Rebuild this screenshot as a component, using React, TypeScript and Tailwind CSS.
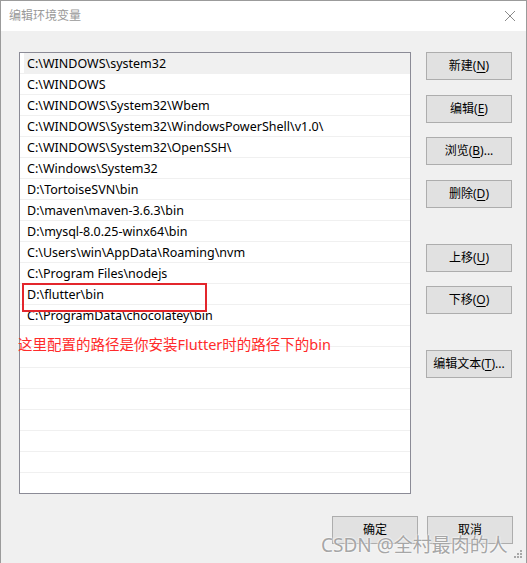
const paths = [
  "C:\\WINDOWS\\system32",
  "C:\\WINDOWS",
  "C:\\WINDOWS\\System32\\Wbem",
  "C:\\WINDOWS\\System32\\WindowsPowerShell\\v1.0\\",
  "C:\\WINDOWS\\System32\\OpenSSH\\",
  "C:\\Windows\\System32",
  "D:\\TortoiseSVN\\bin",
  "D:\\maven\\maven-3.6.3\\bin",
  "D:\\mysql-8.0.25-winx64\\bin",
  "C:\\Users\\win\\AppData\\Roaming\\nvm",
  "C:\\Program Files\\nodejs",
  "D:\\flutter\\bin",
  "C:\\ProgramData\\chocolatey\\bin",
];

const font = "font-['Noto_Sans','Noto_Sans_CJK_SC',sans-serif]";

const Btn = ({ label, className = "" }: { label: React.ReactNode; className?: string }) => (
  <button
    className={`w-[86px] h-[28px] bg-[#e1e1e1] border border-[#adadad] text-[12px] text-black flex items-center justify-center ${className}`}
  >
    {label}
  </button>
);

const Key = ({ k }: { k: string }) => <span className="underline underline-offset-2">{k}</span>;

export default function App() {
  const rows = [...paths, ...Array(21 - paths.length).fill("")];
  return (
    <div className={`relative w-[527px] h-[563px] overflow-hidden border-t border-x border-[#9b9b9b] bg-[#f0f0f0] ${font}`}>
      {/* 标题栏 */}
      <div className="h-[30px] bg-white flex items-center justify-between pl-[8px] pr-[10px]">
        <span className="text-[12px] text-[#999999]">编辑环境变量</span>
        <svg width="12" height="12" viewBox="0 0 12 12" className="text-[#8a8a8a]">
          <path d="M1 1 L11 11 M11 1 L1 11" stroke="currentColor" strokeWidth="1" />
        </svg>
      </div>

      <div className="flex pl-[18px] pt-[21px]">
        {/* 路径列表 */}
        <div className="w-[392px] h-[442px] border border-[#8b8b96] bg-white overflow-hidden">
          {rows.map((p, i) => (
            <div key={i} className="h-[21px] border-b border-[#f0f0f0] pl-[4px]">
              <div
                className={`h-full flex items-center pl-[3px] pt-[2px] text-[12.5px] text-black ${
                  i === 0 ? "bg-[#f0f0f0]" : ""
                }`}
              >
                {p}
              </div>
            </div>
          ))}
        </div>

        {/* 右侧按钮 */}
        <div className="ml-[15px] flex flex-col">
          <Btn label={<>新建(<Key k="N" />)</>} />
          <Btn label={<>编辑(<Key k="E" />)</>} className="mt-[15px]" />
          <Btn label={<>浏览(<Key k="B" />)...</>} className="mt-[14px]" />
          <Btn label={<>删除(<Key k="D" />)</>} className="mt-[15px]" />
          <Btn label={<>上移(<Key k="U" />)</>} className="mt-[36px]" />
          <Btn label={<>下移(<Key k="O" />)</>} className="mt-[14px]" />
          <Btn label={<>编辑文本(<Key k="T" />)...</>} className="mt-[36px]" />
        </div>
      </div>

      <div className="flex justify-end gap-[9px] pr-[13px] mt-[22px]">
        <Btn label="确定" />
        <Btn label="取消" />
      </div>

      {/* 标注 */}
      <div className="absolute left-[21px] top-[282px] w-[185px] h-[29px] border-2 border-[#e3262c]" />
      <div className="absolute left-[17px] top-[333px] text-[14.5px] text-[#ff2b2b] whitespace-nowrap">
        这里配置的路径是你安装Flutter时的路径下的bin
      </div>

      {/* 水印 */}
      <div className="absolute left-[320px] top-[530px] text-[19px] text-[#a6a6a6] whitespace-nowrap [text-shadow:0_0_2px_#fff,0_0_2px_#fff]">
        CSDN @全村最肉的人
      </div>

      {/* 缩放手柄 */}
      <svg className="absolute right-[4px] bottom-[5px]" width="8" height="8" viewBox="0 0 8 8">
        <g fill="#a8a8a8">
          <rect x="6" y="0" width="2" height="2" />
          <rect x="3" y="3" width="2" height="2" />
          <rect x="6" y="3" width="2" height="2" />
          <rect x="0" y="6" width="2" height="2" />
          <rect x="3" y="6" width="2" height="2" />
          <rect x="6" y="6" width="2" height="2" />
        </g>
      </svg>
    </div>
  );
}
